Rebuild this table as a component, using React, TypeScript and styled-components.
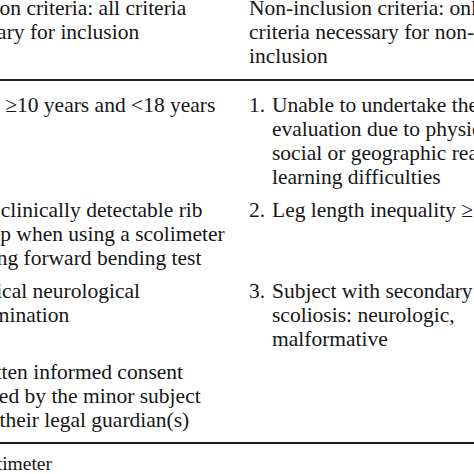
import React from "react";
import styled, { createGlobalStyle } from "styled-components";

const Global = createGlobalStyle`
  html, body { margin: 0; padding: 0; background: #ffffff; }
`;

const Viewport = styled.div`
  width: 474px;
  height: 474px;
  overflow: hidden;
  background: #ffffff;
`;

const Table = styled.div`
  width: 600px;
  margin: -15px 0 0 -59px;
  font-family: "Liberation Serif", "Times New Roman", serif;
  font-size: 21.5px;
  line-height: 24.3px;
  color: #161616;
`;

const Rule = styled.div<{ $w: number }>`
  height: ${(p) => p.$w}px;
  background: #1e1e1e;
`;

const Row = styled.div<{ $pt: number; $pb: number }>`
  display: grid;
  grid-template-columns: 308px 1fr;
  align-items: start;
  padding: ${(p) => p.$pt}px 0 ${(p) => p.$pb}px;
`;

const Body = styled.div`
  padding: 7.6px 0 6px;
`;

const Cell = styled.div`
  white-space: nowrap;
`;

const Item = styled.div<{ $shift?: number }>`
  display: flex;
  white-space: nowrap;
  margin-left: ${(p) => p.$shift ?? 0}px;
`;

const Num = styled.span`
  flex: none;
  width: 23px;
`;

const Line = styled.div``;

const Footnote = styled.div`
  padding-top: 9px;
  font-size: 19.5px;
  line-height: 22px;
  white-space: nowrap;
`;

type ItemProps = { n: number; lines: string[]; shift?: number };

const ListItem = ({ n, lines, shift }: ItemProps) => (
  <Item $shift={shift}>
    <Num>{n}.</Num>
    <div>
      {lines.map((l, i) => (
        <Line key={i}>{l}</Line>
      ))}
    </div>
  </Item>
);

const rows: { left: ItemProps | null; right: ItemProps | null }[] = [
  {
    left: { n: 1, lines: ["Age \u226510 years and <18 years"] },
    right: {
      n: 1,
      lines: [
        "Unable to undertake the clinical",
        "evaluation due to physical,",
        "social or geographic reasons, or",
        "learning difficulties",
      ],
    },
  },
  {
    left: {
      n: 2,
      shift: -2,
      lines: [
        "The clinically detectable rib",
        "hump when using a scolimeter",
        "during forward bending test",
      ],
    },
    right: { n: 2, lines: ["Leg length inequality \u22651 cm"] },
  },
  {
    left: { n: 3, shift: -1, lines: ["Typical neurological", "examination"] },
    right: {
      n: 3,
      lines: ["Subject with secondary", "scoliosis: neurologic,", "malformative"],
    },
  },
  {
    left: {
      n: 4,
      shift: -1,
      lines: [
        "Written informed consent",
        "signed by the minor subject",
        "and their legal guardian(s)",
      ],
    },
    right: null,
  },
];

export default function App() {
  return (
    <Viewport>
      <Global />
      <Table>
        <Rule $w={1} />
        <Row $pt={9.6} $pb={10.5}>
          <Cell>
            <Line>Inclusion criteria: all criteria</Line>
            <Line>necessary for inclusion</Line>
          </Cell>
          <Cell>
            <Line>Non-inclusion criteria: only one</Line>
            <Line>criteria necessary for non-</Line>
            <Line>inclusion</Line>
          </Cell>
        </Row>
        <Rule $w={2} />
        <Body>
          {rows.map((r, i) => (
            <Row key={i} $pt={4} $pb={4}>
              <div>{r.left && <ListItem {...r.left} />}</div>
              <div>{r.right && <ListItem {...r.right} />}</div>
            </Row>
          ))}
        </Body>
        <Rule $w={2} />
        <Footnote>cm centimeter</Footnote>
      </Table>
    </Viewport>
  );
}
